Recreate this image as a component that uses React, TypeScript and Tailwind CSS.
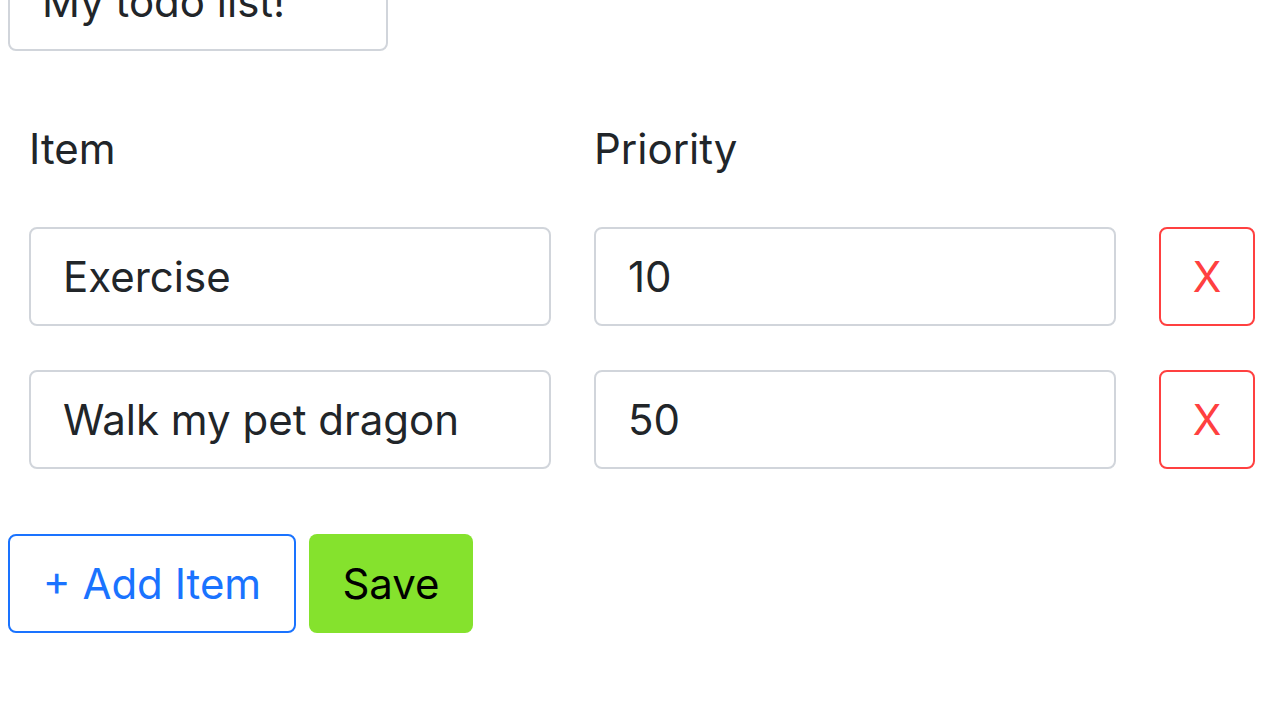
import { useState } from 'react';

interface Row {
  item: string;
  priority: string;
}

export default function App() {
  const [title, setTitle] = useState('My todo list!');
  const [rows, setRows] = useState<Row[]>([
    { item: 'Exercise', priority: '10' },
    { item: 'Walk my pet dragon', priority: '50' },
  ]);

  const update = (idx: number, key: keyof Row, value: string) =>
    setRows(rows.map((r, i) => (i === idx ? { ...r, [key]: value } : r)));

  return (
    <div className="min-h-[720px] bg-white text-[#212529] font-['Inter',sans-serif] text-[42px]">
      <div className="mt-[-48px] pl-2">
        <input
          value={title}
          onChange={(e) => setTitle(e.target.value)}
          className="block w-[380px] h-[99px] rounded-lg border-2 border-[#d1d5db] px-[32px] outline-none"
        />

        <div className="grid grid-cols-[522px_522px_96px] gap-x-[43px] gap-y-[44px] pl-[21px] pt-[64px]">
          <div className="leading-[68px]">Item</div>
          <div className="leading-[68px]">Priority</div>
          <div />
          {rows.map((row, idx) => (
            <div key={idx} className="contents">
              <input
                value={row.item}
                onChange={(e) => update(idx, 'item', e.target.value)}
                className="h-[99px] rounded-lg border-2 border-[#d1d5db] px-[32px] outline-none"
              />
              <input
                value={row.priority}
                onChange={(e) => update(idx, 'priority', e.target.value)}
                className="h-[99px] rounded-lg border-2 border-[#d1d5db] px-[32px] outline-none"
              />
              <button
                onClick={() => setRows(rows.filter((_, i) => i !== idx))}
                className="h-[99px] rounded-lg border-2 border-[#ff4040] text-[#ff4040]"
              >
                X
              </button>
            </div>
          ))}
        </div>

        <div className="flex gap-[13px] pt-[65px]">
          <button
            onClick={() => setRows([...rows, { item: '', priority: '' }])}
            className="h-[99px] w-[288px] rounded-lg border-2 border-[#1a73ff] text-[#1a73ff]"
          >
            + Add Item
          </button>
          <button className="h-[99px] w-[164px] rounded-lg bg-[#85e22d] text-black">Save</button>
        </div>
      </div>
    </div>
  );
}
